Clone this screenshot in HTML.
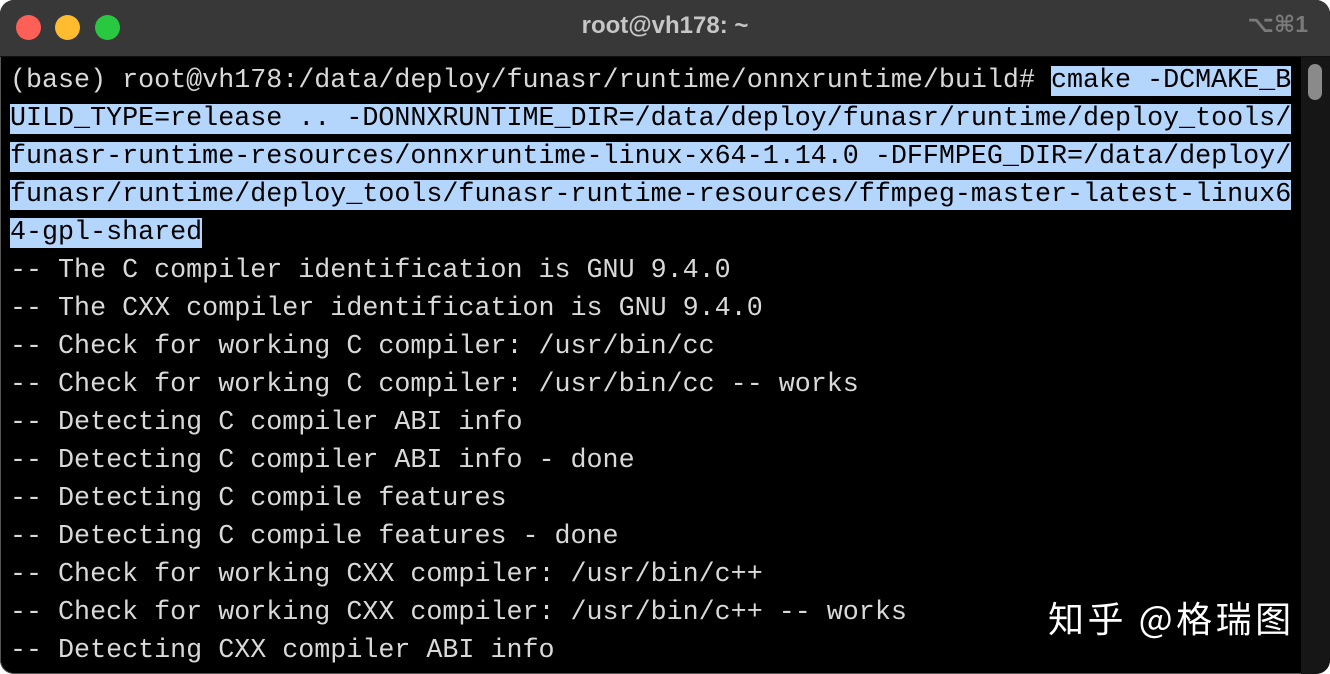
<!DOCTYPE html>
<html><head><meta charset="utf-8"><style>
html,body{margin:0;padding:0;background:#fff;}
.win{position:absolute;left:0;top:0;width:1330px;height:674px;border-radius:14px;overflow:hidden;background:#000;box-shadow:inset 0 0 0 1px #555;}
.tb{position:absolute;left:0;top:0;width:1330px;height:56px;background:#383838;border-bottom:1px solid #111;}
.dot{position:absolute;top:15px;width:25px;height:25px;border-radius:50%;}
.title{position:absolute;left:0;width:1330px;top:12px;text-align:center;font:bold 24px "Liberation Sans",sans-serif;color:#c6c6c6;}
.sc{position:absolute;right:22px;top:11px;font:bold 23px "Liberation Sans","DejaVu Sans",sans-serif;color:#7a7a7a;}
.term{position:absolute;left:10px;top:62px;font-family:"Liberation Mono",monospace;font-size:26.7px;line-height:38px;color:#d9d9d9;white-space:pre;}
.sel{background:#b4d6fd;color:#000;}
.sbar{position:absolute;left:1301px;top:57px;width:29px;height:617px;background:#161616;}
.thumb{position:absolute;left:1308px;top:64px;width:14px;height:36px;border-radius:7px;background:#8a8a8a;}
.wm{position:absolute;left:1048px;top:591px;font:36px "Noto Sans CJK SC","WenQuanYi Zen Hei",sans-serif;color:#fff;letter-spacing:3.5px;}
</style></head><body>
<div class="win">
<div class="tb">
<div class="dot" style="left:16px;background:#fe5f57"></div>
<div class="dot" style="left:55px;background:#febc2e"></div>
<div class="dot" style="left:95px;background:#28c840"></div>
<div class="title">root@vh178: ~</div>
<div class="sc">⌥⌘1</div>
</div>
<div class="sbar"></div><div class="thumb"></div>
<div class="term">(base) root@vh178:/data/deploy/funasr/runtime/onnxruntime/build# <span class="sel">cmake -DCMAKE_B</span>
<span class="sel">UILD_TYPE=release .. -DONNXRUNTIME_DIR=/data/deploy/funasr/runtime/deploy_tools/</span>
<span class="sel">funasr-runtime-resources/onnxruntime-linux-x64-1.14.0 -DFFMPEG_DIR=/data/deploy/</span>
<span class="sel">funasr/runtime/deploy_tools/funasr-runtime-resources/ffmpeg-master-latest-linux6</span>
<span class="sel">4-gpl-shared</span>
-- The C compiler identification is GNU 9.4.0
-- The CXX compiler identification is GNU 9.4.0
-- Check for working C compiler: /usr/bin/cc
-- Check for working C compiler: /usr/bin/cc -- works
-- Detecting C compiler ABI info
-- Detecting C compiler ABI info - done
-- Detecting C compile features
-- Detecting C compile features - done
-- Check for working CXX compiler: /usr/bin/c++
-- Check for working CXX compiler: /usr/bin/c++ -- works
-- Detecting CXX compiler ABI info</div>
<div class="wm">知乎 @格瑞图</div>
</div>
</body></html>
